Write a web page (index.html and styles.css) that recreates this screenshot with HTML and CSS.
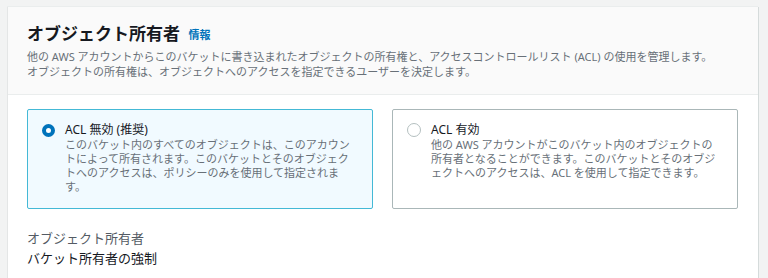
FILE: index.html
```html
<!DOCTYPE html>
<html lang="ja">
<head>
    <meta charset="UTF-8">
    <meta name="viewport" content="width=device-width, initial-scale=1.0">
    <title>オブジェクト所有者</title>
    <link rel="stylesheet" href="styles.css">
</head>
<body>
    <div class="card">
        <div class="card-header">
            <h2>オブジェクト所有者 <a class="info" href="#">情報</a></h2>
            <p class="desc">他の AWS アカウントからこのバケットに書き込まれたオブジェクトの所有権と、アクセスコントロールリスト (ACL) の使用を管理します。<br>オブジェクトの所有権は、オブジェクトへのアクセスを指定できるユーザーを決定します。</p>
        </div>
        <div class="card-body">
            <div class="tiles">
                <label class="tile selected">
                    <span class="radio checked"></span>
                    <span class="tile-text">
                        <span class="tile-title">ACL 無効 (推奨)</span>
                        <span class="tile-desc">このバケット内のすべてのオブジェクトは、このアカウントによって所有されます。このバケットとそのオブジェクトへのアクセスは、ポリシーのみを使用して指定されます。</span>
                    </span>
                </label>
                <label class="tile">
                    <span class="radio"></span>
                    <span class="tile-text">
                        <span class="tile-title">ACL 有効</span>
                        <span class="tile-desc">他の AWS アカウントがこのバケット内のオブジェクトの所有者となることができます。このバケットとそのオブジェクトへのアクセスは、ACL を使用して指定できます。</span>
                    </span>
                </label>
            </div>
            <div class="field">
                <div class="field-label">オブジェクト所有者</div>
                <div class="field-value">バケット所有者の強制</div>
            </div>
        </div>
    </div>
</body>
</html>
```

FILE: styles.css
```css
body {
    margin: 0;
    padding: 7px 10px 0 7px;
    background: #f2f3f3;
    font-family: "Noto Sans", "Noto Sans CJK JP", sans-serif;
    color: #16191f;
}
.card {
    background: #fff;
    border-left: 1px solid #e4e6e6;
    box-shadow: 1px 0 0 #d5dbdb, 0 -1px 0 #eaeded;
    height: 300px;
}
.card-header {
    background: #fafafa;
    border-bottom: 1px solid #eaeded;
    padding: 16px 20px 15px 19px;
}
h2 {
    margin: 0;
    font-size: 17px;
    line-height: 22px;
    font-weight: 700;
}
.info {
    font-size: 11px;
    font-weight: 700;
    color: #0073bb;
    text-decoration: none;
    margin-left: 4px;
    vertical-align: 1px;
}
.desc {
    margin: 3px 0 0;
    font-size: 11px;
    line-height: 15px;
    color: #687078;
}
.card-body {
    padding: 14px 20px 0 19px;
}
.tiles {
    display: grid;
    grid-template-columns: 1fr 1fr;
    gap: 19px;
}
.tile {
    display: flex;
    gap: 10px;
    border: 1px solid #aab7b8;
    border-radius: 2px;
    padding: 11px 16px 13px 14px;
    min-height: 74px;
}
.tile.selected {
    border-color: #44b9d6;
    background: #f1faff;
}
.radio {
    flex: none;
    width: 14px;
    height: 14px;
    box-sizing: border-box;
    border: 1px solid #b4bfc0;
    border-radius: 50%;
    background: #fff;
    margin-top: 2px;
}
.radio.checked {
    width: 13px;
    height: 13px;
    margin-top: 3px;
    border: 4px solid #0073bb;
}
.tile-text {
    display: flex;
    flex-direction: column;
}
.tile .radio + .tile-text {
    margin-left: 0;
}
.tile-title {
    font-size: 12px;
    line-height: 17px;
}
.tile-desc {
    font-size: 11px;
    line-height: 14px;
    color: #687078;
}
.field {
    margin-top: 19px;
}
.field-label {
    font-size: 13px;
    line-height: 20px;
    color: #545b64;
}
.field-value {
    font-size: 13px;
    line-height: 20px;
}
```
